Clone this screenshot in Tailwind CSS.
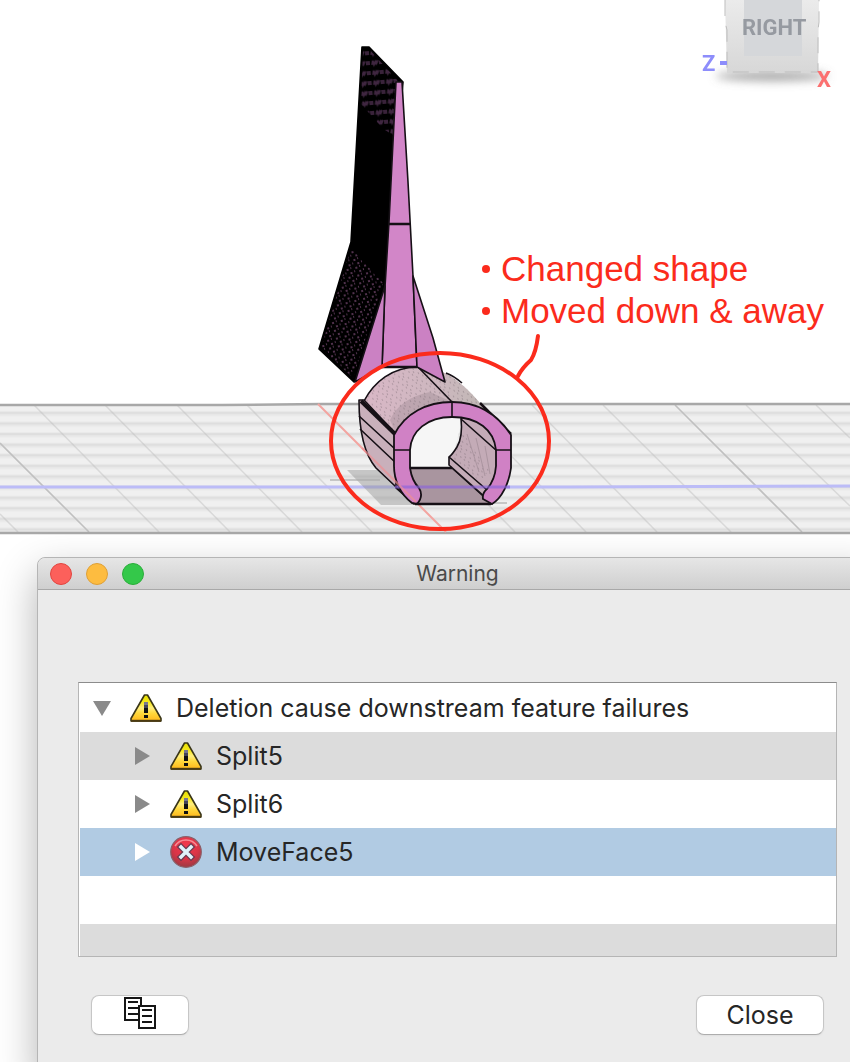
<!DOCTYPE html>
<html lang="en">
<head>
    <meta charset="UTF-8">
    <meta name="viewport" content="width=device-width, initial-scale=1.0">
    <title>Warning</title>
    <script src="https://cdn.jsdelivr.net/npm/@tailwindcss/browser@4"></script>
</head>
<body class="min-h-screen flex flex-col overflow-hidden bg-white font-['Inter',sans-serif] text-[#262626]">

    <!-- shared icons -->
    <svg class="absolute size-0" aria-hidden="true">
        <defs>
            <linearGradient id="yellow" x1="0" y1="0" x2="0" y2="1">
                <stop offset="0" stop-color="#e6e000"/>
                <stop offset=".3" stop-color="#f6e820"/>
                <stop offset=".5" stop-color="#ffee80"/>
                <stop offset=".7" stop-color="#ffd83c"/>
                <stop offset="1" stop-color="#ffb81c"/>
            </linearGradient>
            <radialGradient id="red" cx=".5" cy=".3" r=".7">
                <stop offset="0" stop-color="#f4384c"/>
                <stop offset=".6" stop-color="#d93547"/>
                <stop offset="1" stop-color="#9c3a44"/>
            </radialGradient>
        </defs>
        <symbol id="warn" viewBox="0 0 32 28">
            <path d="M14.500 1h3L31 24.500v2.500H1v-2.500z" fill="url(#yellow)" stroke="#3a3618" stroke-width="1.600" stroke-linejoin="round"/>
            <path d="M1 26.800h30" stroke="#4a3a10" stroke-width="2"/>
            <path d="M14 8h4v3h-4z" fill="#77778e"/>
            <path d="M14 11h4v3h-4z" fill="#44445a"/>
            <path d="M14 14h4v5h-4zM14 21h4v3h-4z" fill="#111"/>
        </symbol>
        <symbol id="error" viewBox="0 0 32 32">
            <circle cx="16" cy="16" r="15.300" fill="url(#red)" stroke="#8b5f68" stroke-width="1.200"/>
            <path d="M5 10a13 13 0 0 1 22 0" fill="none" stroke="#f58b94" stroke-width="1.500"/>
            <path d="M11 11l10 10M21 11L11 21" stroke="#6b3a50" stroke-width="6" stroke-linecap="square"/>
            <path d="M11 11l10 10M21 11L11 21" stroke="#dff3fb" stroke-width="3.500" stroke-linecap="square"/>
        </symbol>
    </svg>

    <!-- 3D viewport -->
    <main>
        <svg class="block w-full h-auto" viewBox="0 0 850 557" role="img" aria-label="Model viewport">
            <defs>
                <linearGradient id="cube" x1="0" y1="0" x2="0" y2="1">
                    <stop offset="0" stop-color="#ebebeb"/>
                    <stop offset="1" stop-color="#d7d7d7"/>
                </linearGradient>
                <linearGradient id="body" x1="0" y1="0" x2="1" y2="0">
                    <stop offset="0" stop-color="#d9b7c6"/>
                    <stop offset=".5" stop-color="#cdb7bf"/>
                    <stop offset="1" stop-color="#b9b9af"/>
                </linearGradient>
                <filter id="soft" x="-30%" y="-200%" width="160%" height="500%"><feGaussianBlur stdDeviation="5"/></filter>
                <filter id="softer"><feGaussianBlur stdDeviation=".7"/></filter>
                <pattern id="stripes" width="850" height="10.600" y="408" patternUnits="userSpaceOnUse">
                    <rect width="850" height="10.600" fill="#f0f0f0"/>
                    <rect y="3" width="850" height="5" fill="#e9e9e9"/>
                    <rect y="4" width="850" height="2" fill="#dedede"/>
                </pattern>
                <pattern id="dots" width="9" height="8" patternUnits="userSpaceOnUse" patternTransform="rotate(-14)">
                    <path d="M1 2h2M5 1h1M4 6h2M8 5h1" stroke="#6b4266" stroke-width="1.400"/>
                </pattern>
                <pattern id="dashes" width="13" height="10" patternUnits="userSpaceOnUse" patternTransform="rotate(-5)">
                    <path d="M1 7l1-4 1 4 2-4v4l2-4M9 7V3M11 7V3" fill="none" stroke="#3f2640" stroke-width="1.800"/>
                </pattern>
                <pattern id="grain" width="11" height="9" patternUnits="userSpaceOnUse" patternTransform="rotate(-25)">
                    <path d="M1 2h1M6 1h1M4 6h1M9 5h1M8 8h1" stroke="#6f5f68" stroke-opacity=".7"/>
                </pattern>
            </defs>

            <!-- ground grid -->
            <rect y="404" width="850" height="129" fill="url(#stripes)"/>
            <g stroke="#bdbdbd" stroke-opacity=".45" stroke-width="1.500">
                <path d="M0 514l18 18M34 405l125 127M105 405l125 127M177 405l125 127M247 405l125 127M390 405l125 127M461 405l125 127M532 405l125 127M603 405l128 127M746 405l104 101M816 405l34 33"/>
            </g>
            <path d="M0 443l89 89M675 405l127 127" stroke="#c0c0c0" stroke-width="1.600"/>
            <path d="M0 405h222l100-1h528" fill="none" stroke="#a8a8a8" stroke-width="2.500"/>
            <path d="M0 533h850" stroke="#a8a8a8" stroke-width="2.500"/>
            <path d="M0 487h570l280-1" fill="none" stroke="#bcbcf7" stroke-width="3"/>
            <path d="M318 404l128 128" stroke="#f3a4a0" stroke-width="2"/>
            <path d="M347 470h40l30 35h-36z" fill="#888" fill-opacity=".4"/>
            <path d="M330 480h50M490 503h17" stroke="#aaa" stroke-opacity=".6" stroke-width="2"/>

            <!-- ring clamp -->
            <g stroke="#161016" stroke-width="1.600" stroke-linejoin="round">
                <path d="M410 468V450C411 431 427 417 452 417L462 420 450 468z" fill="#f6f6f6" stroke="none"/>
                <path d="M364 401C374 382 392 367 418 367C440 367 458 377 480 403L511 435L452 403Q412 404 396 434Z" fill="url(#body)" stroke="none"/>
                <path d="M364 401C374 382 392 367 418 367C440 367 458 377 480 403L511 435L452 403Q412 404 396 434Z" fill="url(#grain)" stroke="none"/>
                <path d="M396 434Q410 404 452 402L430 392Q400 398 390 420Z" fill="#6f5f68" fill-opacity=".2" stroke="none"/>
                <path d="M364 401C374 382 392 367 418 367M446 373Q454 376 462 383" fill="none"/>
                <path d="M480 403l31 31" fill="none" stroke-width="2.500"/>
                <path d="M359 400h5l32 34v54l18 16-38-36q-17-20-17-68z" fill="#c9b0bb"/>
                <path d="M359 416l36 33M360 429l36 34" fill="none"/>
                <path d="M361 401l34 33" stroke-width="4"/>
                <path d="M418 367l35 36" fill="none"/>
                <path d="M409 468h43l40 36h-76z" fill="#a9959f"/>
                <path d="M461 418q2 19-4 29-5 8-8 10v8l36 32 14-30V440L480 415z" fill="#c4abb7"/>
                <path d="M461 430q1 14-10 28l30 24 8-12-18-25z" fill="url(#grain)" stroke="none"/>
                <path d="M461 419l36 32M449 457l38 33" fill="none"/>
                <path d="M467 434l12 38M476 438l9 38M485 446l5 28" stroke="#ab95a0" stroke-width="1"/>
                <path d="M394 435C405 413 427 402 452 402C477 402 496 412 511 435V468C509 483 502 498 492 504L483 499Q482 493 487 489Q495 480 496 466V450C494 430 478 417 452 417C427 417 411 431 410 450V468Q412 481 419 488Q424 496 417 504L412 503C400 494 394 480 394 466Z" fill="#d081c5" stroke-width="1.800"/>
                <path d="M452 402v15M394 450h16M496 450h15" fill="none"/>
                <path d="M415 504h76M410 468h42" stroke-width="2.500"/>
            </g>
            <path d="M395 487h115" stroke="#8a63dc" stroke-opacity=".65" stroke-width="3"/>
            <path d="M362 448l54 54" stroke="#ee8f93" stroke-opacity=".7" stroke-width="2"/>

            <!-- blade -->
            <g stroke="#161016" stroke-width="1.600" stroke-linejoin="round">
                <path d="M362 47h7l34 35-11 120-7 85-31 95-35-33 32-107z" fill="#000" stroke="#000"/>
                <path d="M363 50l6-1 29 32-5 54-8-5-8-8-8-9-8-9z" fill="url(#dashes)" stroke="none"/>
                <path d="M351 248l32 35-30 95-32-30z" fill="url(#dots)" stroke="none"/>
                <path d="M396 82h6l6 100 5 94 4 91h-35l3-80 4-65z" fill="#d286c8"/>
                <path d="M385 286l-3 81-27 15z" fill="#cb81c3"/>
                <path d="M413 276l4 91 28 15-12-44z" fill="#cb81c3"/>
                <path d="M389 224h21M382 367h35" stroke-width="2.500"/>
            </g>

            <!-- markup -->
            <g fill="none" stroke="#fb2b1c" stroke-width="4" stroke-linecap="round">
                <ellipse cx="440" cy="441" rx="109" ry="88"/>
                <path d="M538 336q-2 16-7 24-9 8-13 16"/>
            </g>
            <g class="font-['Liberation_Sans',sans-serif] text-[35px]" fill="#fb2b1c">
                <circle cx="486" cy="269" r="4"/>
                <circle cx="486" cy="311" r="4"/>
                <text x="501" y="281">Changed shape</text>
                <text x="501" y="323">Moved down &amp; away</text>
            </g>

            <!-- view cube -->
            <ellipse cx="772" cy="76" rx="56" ry="5" fill="#777" fill-opacity=".65" filter="url(#soft)"/>
            <path d="M725 0h94l-1 73h-91z" fill="url(#cube)"/>
            <path d="M744 0h58v56h-58z" fill="#d5d7da"/>
            <path d="M725 0v22l2 8v42h91V30l1-8V0" fill="none" stroke="#bdbdbd" stroke-dasharray="16 10"/>
            <g class="font-['Roboto',sans-serif] font-bold text-[22px]" filter="url(#softer)">
                <text x="742" y="35" fill="#969aa1">RIGHT</text>
                <text x="702" y="71" fill="#8d8dfb">Z</text>
                <text x="817" y="87" fill="#fb7070">X</text>
                <path d="M720 63h7" stroke="#8d8dfb" stroke-width="4"/>
            </g>
        </svg>
    </main>

    <!-- warning dialog, runs off the right edge -->
    <section class="grow flex flex-col ml-[37px] -mr-7 bg-[#ebebeb] border border-[#b5b5b5] rounded-t-lg shadow-[0_16px_40px_rgba(0,0,0,0.3)]">
        <header class="relative h-8 flex items-center gap-[14px] px-3 rounded-t-lg bg-linear-to-b from-[#e6e6e6] to-[#cfcfcf] border-b border-[#a8a8a8]">
            <button aria-label="Close window" class="size-[22px] rounded-full bg-[#fc605b] border border-[#e2453f]"></button>
            <button aria-label="Minimize" class="size-[22px] rounded-full bg-[#fdbc40] border border-[#dfa036]"></button>
            <button aria-label="Zoom" class="size-[22px] rounded-full bg-[#34c84a] border border-[#2aae3a]"></button>
            <h1 class="absolute inset-x-0 text-center text-[21px] leading-8 text-[#4a4a4a] pointer-events-none">Warning</h1>
        </header>

        <div class="px-10 pt-[92px]">
            <ul class="bg-white border border-[#b5b5b5] border-t-[#8c8c8c] pt-px pl-px text-[25px] leading-[48px]">
                <li class="h-12 flex items-center pl-3">
                    <button aria-label="Collapse" class="w-5 mr-[18px] flex justify-center"><svg class="w-[18px] h-[15px]" viewBox="0 0 18 15"><path d="M0 0h18L9 15z" fill="#8a8a8a"/></svg></button>
                    <svg class="w-8 h-7 mr-[14px]"><use href="#warn"/></svg>
                    <span>Deletion cause downstream feature failures</span>
                </li>
                <li class="h-12 flex items-center pl-[52px] bg-[#dcdcdc]">
                    <button aria-label="Expand" class="w-5 mr-[18px] flex justify-center"><svg class="w-[15px] h-[18px]" viewBox="0 0 15 18"><path d="M0 0v18l15-9z" fill="#8a8a8a"/></svg></button>
                    <svg class="w-8 h-7 mr-[14px]"><use href="#warn"/></svg>
                    <span>Split5</span>
                </li>
                <li class="h-12 flex items-center pl-[52px]">
                    <button aria-label="Expand" class="w-5 mr-[18px] flex justify-center"><svg class="w-[15px] h-[18px]" viewBox="0 0 15 18"><path d="M0 0v18l15-9z" fill="#8a8a8a"/></svg></button>
                    <svg class="w-8 h-7 mr-[14px]"><use href="#warn"/></svg>
                    <span>Split6</span>
                </li>
                <li class="h-12 flex items-center pl-[52px] bg-[#b1cbe3]">
                    <button aria-label="Expand" class="w-5 mr-[18px] flex justify-center"><svg class="w-[15px] h-[18px]" viewBox="0 0 15 18"><path d="M0 0v18l15-9z" fill="#fff"/></svg></button>
                    <svg class="size-8 mr-[14px]"><use href="#error"/></svg>
                    <span>MoveFace5</span>
                </li>
                <li class="h-12"></li>
                <li class="h-8 bg-[#dcdcdc]"></li>
            </ul>
        </div>

        <footer class="flex justify-between px-[53px] py-[38px]">
            <button aria-label="Copy" class="w-[98px] h-10 flex justify-center items-center bg-white border border-[#c6c6c6] border-b-[#adadad] rounded-lg shadow-xs">
                <svg class="w-8 h-8 mb-1" viewBox="0 0 32 32" fill="#fff" stroke="#161616" stroke-width="2">
                    <path d="M1 1h16v22H1zM4 5h10M4 11h10M4 17h10"/>
                    <path d="M15 9h16v22H15zM18 13h10M18 19h10M18 25h10"/>
                </svg>
            </button>
            <button class="w-32 h-10 bg-white border border-[#c6c6c6] border-b-[#adadad] rounded-lg shadow-xs text-[25px] leading-9">Close</button>
        </footer>
    </section>

</body>
</html>
